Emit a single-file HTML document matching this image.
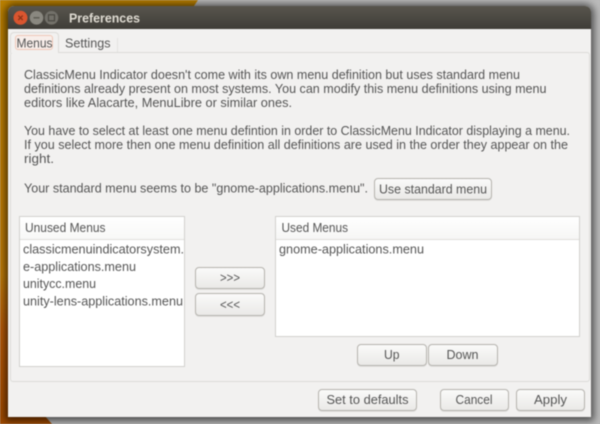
<!DOCTYPE html>
<html><head><meta charset="utf-8"><style>
html,body{margin:0;padding:0;background:#b5b5b5}
#r{position:relative;width:600px;height:424px;overflow:hidden;filter:blur(.5px)}
#bg{position:absolute;left:0;top:0}
#w{position:absolute;left:7.5px;top:6px;width:583px;height:411px;background:#f2f1f0;border-radius:6px 6px 0 0;box-shadow:0 1px 8px 3px rgba(0,0,0,.6)}
#h{position:absolute;left:0;top:0;width:583px;height:23px;border-radius:6px 6px 0 0;background:linear-gradient(#58554d,#3f3d38)}
.p{position:absolute;box-sizing:border-box}
.b{position:absolute;box-sizing:border-box;border:1px solid #b5b3ae;border-radius:4px;background:linear-gradient(#fafaf9,#eaE9e7);box-shadow:0 1px 0 #e2e1df}
svg#t{position:absolute;left:0;top:0}
svg#t text{font-family:"Liberation Sans",sans-serif;font-size:13px;fill:#555}
</style></head><body><div id="r">
<svg id="bg" width="600" height="424"><defs>
<linearGradient id="g" x1="0" y1="0" x2="0" y2="1"><stop offset="0" stop-color="#bb8000"/><stop offset=".65" stop-color="#c07c08"/><stop offset=".78" stop-color="#b85a08"/><stop offset="1" stop-color="#a04a00"/></linearGradient></defs>
<rect width="600" height="424" fill="#bcbcbc"/>
<path d="M0 0H198L190 12H8V424H0Z" fill="url(#g)"/>
<path d="M0 424V415H44L52 424Z" fill="#a04a00"/>
</svg>
<div id="w"><div id="h"></div></div>
<div class="p" style="left:9.5px;top:52px;width:580px;height:329.5px;border:1px solid #dcdbd8;border-radius:3px"></div>
<div class="p" style="left:9.5px;top:32px;width:49px;height:21px;background:#f2f1f0;border:1px solid #dcdbd8;border-bottom:0;border-radius:4px 4px 0 0"></div>
<div class="p" style="left:117px;top:38px;width:1px;height:14px;background:#e4e3e0"></div>
<div class="p" style="left:15px;top:34.5px;width:38px;height:15px;border:1px solid #f0c8b8;border-radius:3px;background:#f8eeea"></div>
<div class="p" style="left:19px;top:216px;width:165.5px;height:150.5px;background:#fff;border:1px solid #d2d1ce"></div>
<div class="p" style="left:20px;top:217px;width:163.5px;height:23px;background:linear-gradient(#fff,#f8f8f7);border-bottom:1px solid #e0dfdc"></div>
<div class="p" style="left:275px;top:216px;width:304.5px;height:121px;background:#fff;border:1px solid #d2d1ce"></div>
<div class="p" style="left:276px;top:217px;width:302.5px;height:23px;background:linear-gradient(#fff,#f6f6f5);border-bottom:1px solid #e0dfdc"></div>
<div class="b" style="left:374px;top:178px;width:118px;height:22px"></div>
<div class="b" style="left:195px;top:266.5px;width:69.5px;height:22.5px"></div>
<div class="b" style="left:195px;top:293px;width:69.5px;height:22.5px"></div>
<div class="b" style="left:357px;top:343.5px;width:69.5px;height:22px"></div>
<div class="b" style="left:428px;top:343.5px;width:69.5px;height:22px"></div>
<div class="b" style="left:318px;top:388.5px;width:99px;height:22px"></div>
<div class="b" style="left:440px;top:388.5px;width:69px;height:22px"></div>
<div class="b" style="left:516px;top:388.5px;width:69px;height:22px"></div>
<svg id="t" width="600" height="424">
<circle cx="20.5" cy="17.8" r="7" fill="#d9552f"/><path d="M18.3 15.6l4.4 4.4M22.7 15.6l-4.4 4.4" stroke="#8a3418" stroke-width="1.3"/>
<circle cx="36.5" cy="17.8" r="6.8" fill="#8a8880"/><path d="M33.5 17.8h6" stroke="#5a5850" stroke-width="1.3"/>
<circle cx="51.5" cy="17.8" r="6.8" fill="#73716a"/><rect x="48.5" y="14.8" width="6" height="6" fill="none" stroke="#48463f" stroke-width="1.1"/>
<text x="69" y="22.5" textLength="71" lengthAdjust="spacingAndGlyphs" style="font-weight:bold;fill:#dfdbd2">Preferences</text>
<text x="16.5" y="47.5" textLength="36" lengthAdjust="spacingAndGlyphs">Menus</text>
<text x="65" y="47.5" textLength="45.5" lengthAdjust="spacingAndGlyphs">Settings</text>
<text x="24" y="79" textLength="496" lengthAdjust="spacingAndGlyphs">ClassicMenu Indicator doesn't come with its own menu definition but uses standard menu</text>
<text x="24" y="93" textLength="522.5" lengthAdjust="spacingAndGlyphs">definitions already present on most systems. You can modify this menu definitions using menu</text>
<text x="24" y="107" textLength="268" lengthAdjust="spacingAndGlyphs">editors like Alacarte, MenuLibre or similar ones.</text>
<text x="24" y="135" textLength="546" lengthAdjust="spacingAndGlyphs">You have to select at least one menu defintion in order to ClassicMenu Indicator displaying a menu.</text>
<text x="24" y="149" textLength="544" lengthAdjust="spacingAndGlyphs">If you select more then one menu definition all definitions are used in the order they appear on the</text>
<text x="24" y="163" textLength="30" lengthAdjust="spacingAndGlyphs">right.</text>
<text x="24" y="192.5" textLength="344" lengthAdjust="spacingAndGlyphs">Your standard menu seems to be "gnome-applications.menu".</text>
<text x="379" y="193.5" textLength="108" lengthAdjust="spacingAndGlyphs">Use standard menu</text>
<text x="25" y="232" textLength="80.5" lengthAdjust="spacingAndGlyphs">Unused Menus</text>
<text x="281.5" y="232" textLength="66.5" lengthAdjust="spacingAndGlyphs">Used Menus</text>
<text x="23" y="253.5" textLength="161" lengthAdjust="spacingAndGlyphs">classicmenuindicatorsystem.</text>
<text x="23" y="271" textLength="113" lengthAdjust="spacingAndGlyphs">e-applications.menu</text>
<text x="23" y="288" textLength="73" lengthAdjust="spacingAndGlyphs">unitycc.menu</text>
<text x="23" y="305.5" textLength="160" lengthAdjust="spacingAndGlyphs">unity-lens-applications.menu</text>
<text x="279" y="253.5" textLength="145" lengthAdjust="spacingAndGlyphs">gnome-applications.menu</text>
<text x="220" y="282" textLength="20" lengthAdjust="spacingAndGlyphs">&gt;&gt;&gt;</text>
<text x="220" y="309" textLength="20" lengthAdjust="spacingAndGlyphs">&lt;&lt;&lt;</text>
<text x="384" y="359" textLength="15.5" lengthAdjust="spacingAndGlyphs">Up</text>
<text x="446.5" y="359" textLength="32" lengthAdjust="spacingAndGlyphs">Down</text>
<text x="326.5" y="404" textLength="82" lengthAdjust="spacingAndGlyphs">Set to defaults</text>
<text x="455.5" y="404" textLength="37" lengthAdjust="spacingAndGlyphs">Cancel</text>
<text x="534" y="404" textLength="33" lengthAdjust="spacingAndGlyphs">Apply</text>
</svg>
</div></body></html>
